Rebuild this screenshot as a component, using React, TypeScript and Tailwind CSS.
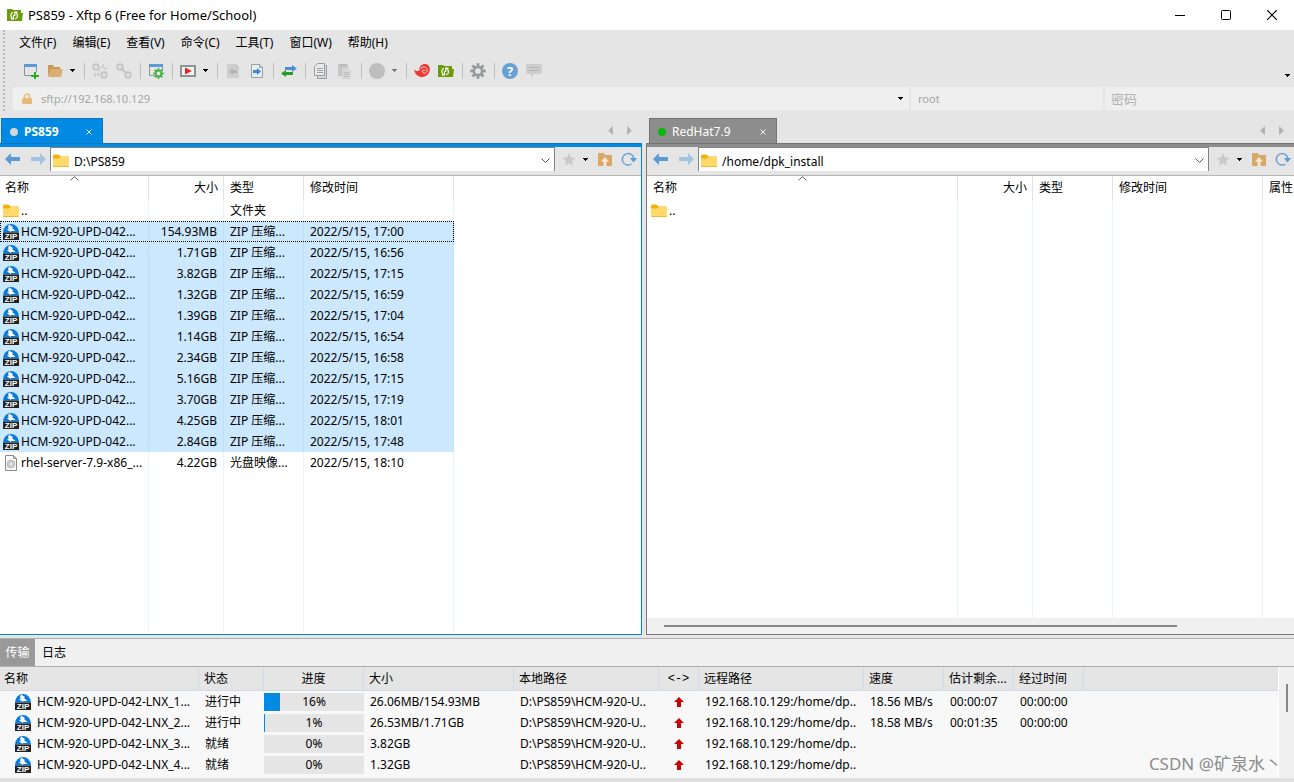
import React from 'react';

interface IIconProps {
  className?: string;
}

const ZipIcon = React.memo<IIconProps>(({ className = '' }) => (
  <svg viewBox="0 0 16 16" className={`h-4 w-4 shrink-0 ${className}`} aria-hidden="true">
    <path d="M0 8.500a8 8.500 0 0 1 16 0z" fill="#0a7bd8" />
    <path d="M6 .5l4 2.500-1 1 3.500 3H8V8L4 5.500l2-1-1-1z" fill="#fff" />
    <rect y="8.500" width="16" height="7.500" fill="#222" />
    <text x="8" y="15" textAnchor="middle" fontSize="8" fontWeight="700" fill="#fff" fontFamily="Liberation Sans, sans-serif">
      ZIP
    </text>
  </svg>
));

const FolderIcon = () => (
  <svg viewBox="0 0 16 14" className="h-[14px] w-4 shrink-0" aria-hidden="true">
    <path d="M0 2a1.500 1.500 0 0 1 1.500-1.500h4L7.500 2.500H15a1 1 0 0 1 1 1V12H0z" fill="#f4b10b" />
    <path d="M0 4.500h6L8 3h8v9a1 1 0 0 1-1 1H1a1 1 0 0 1-1-1z" fill="#ffd969" />
    <path d="M0 12h16a1 1 0 0 1-1 1H1a1 1 0 0 1-1-1z" fill="#f2b632" />
  </svg>
);

const DiscImageIcon = () => (
  <svg viewBox="0 0 16 16" className="h-4 w-4 shrink-0" aria-hidden="true">
    <path d="M2.500.5h8l3 3v12h-11z" fill="#fafafa" stroke="#8a8a8a" />
    <path d="M10.500.5v3h3" fill="none" stroke="#8a8a8a" />
    <circle cx="8" cy="9" r="4" fill="#c9cdd0" stroke="#aaa" strokeWidth=".6" />
    <circle cx="8" cy="9" r="1.200" fill="#eee" />
  </svg>
);

const XftpIcon = ({ className = '' }: IIconProps) => (
  <svg viewBox="0 0 16 14" className={`h-[14px] w-4 ${className}`} aria-hidden="true">
    <path d="M0 1h5l1 1h8v3h2l-1 8H0z" fill="#6b9a0b" />
    <path d="M6 4.300C3.200 5 3.200 9 5.200 10.300M4 10.800h2.500V7M8 11c3-.5 3.200-4.800 1-6.200M10.500 4.200H7.800V8" fill="none" stroke="#fff" strokeWidth="1.200" />
  </svg>
);

const Caret = ({ className = '' }: IIconProps) => (
  <svg viewBox="0 0 5 3" className={`h-[3px] w-[5px] ${className}`} shapeRendering="crispEdges" aria-hidden="true">
    <path d="M0 0h5v1H4v1H3v1H2V2H1V1H0z" fill="currentColor" />
  </svg>
);

interface IToolButtonProps {
  label: string;
  children: React.ReactNode;
}

const ToolButton = ({ label, children }: IToolButtonProps) => (
  <button type="button" aria-label={label} className="flex h-6 w-6 items-center justify-center">
    <svg viewBox="0 0 16 16" className="h-4 w-4">
      {children}
    </svg>
  </button>
);

const ToolCaret = ({ label, className = '' }: { label: string; className?: string }) => (
  <button type="button" aria-label={label} className={`flex h-6 w-[13px] items-center pl-[3px] ${className}`}>
    <Caret />
  </button>
);

const ToolSeparator = () => (
  <div className="flex w-2 justify-center">
    <div className="h-4 w-px bg-[#bdbdbd]" />
  </div>
);

const gearTeeth = [0, 45, 90, 135, 180, 225, 270, 315];

const Gear = ({ cx, cy, r, color, hole }: { cx: number; cy: number; r: number; color: string; hole: string }) => (
  <g fill={color}>
    {gearTeeth.map((angle) => (
      <path key={angle} d={`M${cx - r * 0.18} ${cy - r}h${r * 0.36}v${r}h-${r * 0.36}z`} transform={`rotate(${angle} ${cx} ${cy})`} />
    ))}
    <circle cx={cx} cy={cy} r={r * 0.7} />
    <circle cx={cx} cy={cy} r={r * 0.36} fill={hole} />
  </g>
);

const TitleBar = () => (
  <header className="flex h-[30px] items-center bg-white pl-[7px]">
    <XftpIcon />
    <h1 className="ml-[5px] text-[13px]">PS859 - Xftp 6 (Free for Home/School)</h1>
    <div className="ml-auto flex text-black">
      <button type="button" aria-label="最小化" className="flex h-[30px] w-[46px] items-center justify-center">
        <svg viewBox="0 0 10 10" className="h-[10px] w-[10px]"><path d="M0 5.500h10" stroke="currentColor" /></svg>
      </button>
      <button type="button" aria-label="最大化" className="flex h-[30px] w-[46px] items-center justify-center">
        <svg viewBox="0 0 10 10" className="h-[10px] w-[10px]"><rect x=".5" y=".5" width="9" height="9" rx="1" fill="none" stroke="currentColor" /></svg>
      </button>
      <button type="button" aria-label="关闭" className="flex h-[30px] w-[45px] items-center justify-center">
        <svg viewBox="0 0 10 10" className="h-[10px] w-[10px]"><path d="M0 0l10 10M10 0L0 10" stroke="currentColor" strokeWidth="1.200" /></svg>
      </button>
    </div>
  </header>
);

const menus = ['文件(F)', '编辑(E)', '查看(V)', '命令(C)', '工具(T)', '窗口(W)', '帮助(H)'];

const MenuBar = () => (
  <nav className="flex h-[26px] items-center gap-4 pl-[6px]">
    {menus.map((menu) => (
      <button key={menu} type="button">{menu}</button>
    ))}
  </nav>
);

const Toolbar = () => (
  <div className="flex h-[31px] items-center pb-[2px] pl-[6px]">
    <ToolButton label="新建会话">
      <path d="M1 1h13v3H1z" fill="#5a9bd5" />
      <path d="M1.500 4v8.500H9M13.500 4v5" fill="none" stroke="#8d9296" />
      <path d="M11 9h2v3h3v2h-3v3h-2v-3H8v-2h3z" fill="#23a923" />
    </ToolButton>
    <ToolButton label="打开">
      <path d="M1 2h5l1 2h6v3H4l-3 6z" fill="#c9995a" />
      <path d="M4 6h12l-2 8H1z" fill="#dcae72" />
    </ToolButton>
    <ToolCaret label="最近会话" />
    <ToolSeparator />
    <ToolButton label="断开">
      <g fill="none" stroke="#c6c6c6" strokeWidth="2">
        <circle cx="4" cy="4" r="2.800" />
        <circle cx="12" cy="12" r="2.800" />
        <path d="M6 6l2 2M9 9l1 1M11 1v3M15 5l-3 1M9 5l2-1M3 10v4M6 10v3" strokeWidth="1.500" />
      </g>
    </ToolButton>
    <ToolButton label="重新连接">
      <g fill="none" stroke="#c6c6c6" strokeWidth="2">
        <circle cx="4" cy="4" r="2.800" />
        <circle cx="12" cy="12" r="2.800" />
        <path d="M5 5l6 6" />
      </g>
    </ToolButton>
    <ToolSeparator />
    <ToolButton label="属性">
      <path d="M1 1h14v3H1z" fill="#5a9bd5" />
      <path d="M1.500 4v8.500H6M14.500 4v4" fill="none" stroke="#8d9296" />
      <Gear cx={10.5} cy={10.5} r={5.3} color="#45b045" hole="#e5e5e5" />
    </ToolButton>
    <ToolSeparator />
    <ToolButton label="同步">
      <path d="M1 3h14v10H1z" fill="#f3f3f3" stroke="#8d9296" strokeWidth="2" />
      <path d="M5 4.500v7L12 8z" fill="#e02828" />
    </ToolButton>
    <ToolCaret label="同步选项" />
    <ToolSeparator />
    <ToolButton label="传输到左侧">
      <path d="M2 1h9l3 3v11H2z" fill="#cecece" />
      <path d="M11 1v3h3" fill="none" stroke="#bbb" />
      <path d="M12 7H8V5L4 8.500 8 12v-2h4z" fill="#b2b2b2" />
    </ToolButton>
    <ToolButton label="传输到右侧">
      <path d="M2.500 1.500h8l3 3v10h-11z" fill="#e9eef2" stroke="#999fa4" />
      <path d="M10.500 1.500v3h3" fill="none" stroke="#999fa4" />
      <path d="M4 7h4V5l4 3.500L8 12v-2H4z" fill="#4285d0" />
    </ToolButton>
    <ToolSeparator />
    <ToolButton label="双向传输">
      <path d="M4 4h7V2l5 3.500L11 9V7H4z" fill="#4a90d9" />
      <path d="M12 9H5V7L0 10.500 5 14v-2h7z" fill="#23a023" />
    </ToolButton>
    <ToolSeparator />
    <ToolButton label="复制">
      <path d="M4.500 2.500h9v13h-9z" fill="#d5d5d5" stroke="#9a9fa2" />
      <path d="M4.500.5h7v12h-10v-9z" fill="#e9e9e9" stroke="#9a9fa2" />
      <path d="M4 5.500h6M4 7.500h6M4 9.500h6" stroke="#9a9fa2" />
    </ToolButton>
    <ToolButton label="粘贴">
      <path d="M1 1h10v12H1z" fill="#c6c6c6" />
      <path d="M5 5h6l3 3v8H5z" fill="#d6d6d6" />
      <path d="M3 1h6v2H3z" fill="#b9b9b9" />
      <path d="M7 9.500h5M7 11.500h5M7 13.500h5" stroke="#bbb" />
    </ToolButton>
    <ToolSeparator />
    <ToolButton label="停止">
      <circle cx="8" cy="8" r="8" fill="#bebebe" />
    </ToolButton>
    <ToolCaret label="停止选项" className="text-[#777]" />
    <ToolSeparator />
    <ToolButton label="Xshell">
      <path d="M0 6.500C2 8 3.500 8.500 5 7.500 5 3 8.500.5 12 1c4 .8 5 6 2.500 9.500C11.500 15.500 2 16 0 6.500z" fill="#ee3a33" />
      <path d="M5 7.500C6 4.500 10 3 12.500 5c1.500 2 .5 5-2 5.200-2 0-2.800-2.200-1.300-3.200 1-.5 1.800.3 1.500 1" fill="none" stroke="#f5dedd" strokeWidth=".9" />
    </ToolButton>
    <button type="button" aria-label="Xftp" className="flex h-6 w-6 items-center justify-center">
      <XftpIcon />
    </button>
    <ToolSeparator />
    <ToolButton label="选项">
      <Gear cx={8} cy={8} r={7.8} color="#979b9d" hole="#e5e5e5" />
    </ToolButton>
    <ToolSeparator />
    <ToolButton label="帮助">
      <circle cx="8" cy="8" r="8" fill="#6a9fd4" />
      <text x="8" y="13" textAnchor="middle" fontSize="13" fontWeight="700" fill="#fff">?</text>
    </ToolButton>
    <ToolButton label="反馈">
      <path d="M2 1h12a2 2 0 0 1 2 2v6a2 2 0 0 1-2 2H8l-3 4v-4H2a2 2 0 0 1-2-2V3a2 2 0 0 1 2-2z" fill="#cdcdcd" />
      <path d="M3 4.500h10M3 7.500h10" stroke="#b5b5b5" />
    </ToolButton>
    <button type="button" aria-label="更多按钮" className="mr-1 ml-auto self-end pb-2">
      <Caret />
    </button>
  </div>
);

const AddressBar = () => (
  <div className="flex h-[23px] gap-[2px] text-[#a5a5a5]">
    <div className="flex min-w-0 flex-[881] items-center bg-[#efefef] pr-[6px] pl-[9px]">
      <svg viewBox="0 0 10 12" className="mr-[9px] h-3 w-[10px] shrink-0" aria-hidden="true">
        <path d="M2.500 6V3.500a2.500 2.500 0 0 1 5 0V6" fill="none" stroke="#e8bd80" strokeWidth="1.500" />
        <rect y="5" width="10" height="6" rx="1" fill="#e9b877" />
      </svg>
      <input aria-label="地址" defaultValue="sftp://192.168.10.129" className="min-w-0 flex-1 bg-transparent text-[11px] outline-none" />
      <button type="button" aria-label="地址历史" className="text-black"><Caret /></button>
    </div>
    <div className="flex min-w-0 flex-[178] bg-[#efefef] px-[7px]">
      <input aria-label="用户名" defaultValue="root" className="w-full min-w-0 bg-transparent text-[11px] outline-none" />
    </div>
    <div className="flex min-w-0 flex-[177] bg-[#efefef] px-[6px]">
      <input type="password" aria-label="密码" placeholder="密码" className="w-full min-w-0 bg-transparent text-[13px] outline-none placeholder:text-[#b0b0b0]" />
    </div>
  </div>
);

interface IPaneFrameProps {
  title: string;
  path: string;
  active: boolean;
  className: string;
  children: React.ReactNode;
}

const PaneFrame = ({ title, path, active, className, children }: IPaneFrameProps) => (
  <section className={`flex min-w-0 flex-col ${className}`}>
    <div className="flex h-[33px] items-end">
      <div
        role="tab"
        aria-selected={active}
        className={`flex h-[25px] items-center border-x border-t pt-[2px] pr-[10px] pl-2 text-white ${
          active ? 'ml-px w-[102px] border-[#0b77c2] bg-[#008ae4] font-bold' : 'ml-[3px] w-[128px] border-[#747474] bg-[#8d8d8d]'
        }`}
      >
        <span className={`mr-[6px] h-2 w-2 rounded-full ${active ? 'bg-[#d5d5d5]' : 'bg-[#08b808]'}`} />
        {title}
        <button type="button" aria-label="关闭标签" className="ml-auto">
          <svg viewBox="0 0 6 6" className="h-[6px] w-[6px]"><path d="M.5.5l5 5M5.500.5l-5 5" stroke="#fff" strokeWidth=".9" /></svg>
        </button>
      </div>
      <div className="mr-[10px] mb-2 ml-auto flex gap-[14px] text-[#b3b3b3]">
        <button type="button" aria-label="上一个标签">
          <svg viewBox="0 0 5 9" className="h-[9px] w-[5px]"><path d="M5 0v9L0 4.500z" fill="currentColor" /></svg>
        </button>
        <button type="button" aria-label="下一个标签">
          <svg viewBox="0 0 5 9" className="h-[9px] w-[5px]"><path d="M0 0v9l5-4.500z" fill="currentColor" /></svg>
        </button>
      </div>
    </div>
    <div
      className={`flex min-h-0 flex-1 flex-col border-b ${
        active ? 'border-r border-[#0b82cf]' : 'border-l border-[#7a7a7a]'
      }`}
    >
      <div className={`h-1 shrink-0 border-t ${active ? 'border-[#0b77c2] bg-[#008ae4]' : 'border-[#747474] bg-[#8d8d8d]'}`} />
      <div className={`flex h-[29px] shrink-0 items-center border-b border-[#b5b5b5] bg-[#e5e5e5] pb-1 ${active ? 'pr-1 pl-[5px]' : 'pr-[3px] pl-[6px]'}`}>
        <button type="button" aria-label="后退" className="mr-[9px]">
          <svg viewBox="0 0 16 12" className="h-3 w-4"><path d="M0 6l6-6v4h9v4H6v4z" fill="#5b9bd5" /></svg>
        </button>
        <button type="button" aria-label="前进" className="mr-1">
          <svg viewBox="0 0 16 12" className="h-3 w-4"><path d="M16 6l-6-6v4H1v4h9v4z" fill="#a3c3df" /></svg>
        </button>
        <div className="flex h-6 min-w-0 flex-1 items-center border-x border-t border-[#838383] bg-white pt-[2px] pr-1 pl-[2px]">
          <FolderIcon />
          <input aria-label="路径" defaultValue={path} className="ml-[5px] min-w-0 flex-1 bg-transparent pt-[2px] outline-none" />
          <button type="button" aria-label="路径历史">
            <svg viewBox="0 0 9 5" className="h-[5px] w-[9px]"><path d="M.5.5l4 4 4-4" fill="none" stroke="#555" /></svg>
          </button>
        </div>
        <button type="button" aria-label="书签" className="mr-[7px] ml-[7px]">
          <svg viewBox="0 0 14 13" className="h-[13px] w-[14px]"><path d="M7 0l2 4.500 5 .5-4 3 1.500 5L7 10.300 2.500 13 4 8 0 5l5-.5z" fill="#c9c9c9" /></svg>
        </button>
        <button type="button" aria-label="书签列表" className="mr-[10px]"><Caret /></button>
        <button type="button" aria-label="上级目录" className="mr-[9px]">
          <svg viewBox="0 0 14 13" className="h-[13px] w-[14px]">
            <path d="M0 0h6l1 2h7v11H0z" fill="#d9a766" />
            <path d="M7 4l4 4.500H8.500V13h-3V8.500H3z" fill="#f5ead9" />
          </svg>
        </button>
        <button type="button" aria-label="刷新">
          <svg viewBox="0 0 16 14" className="h-[14px] w-4">
            <path d="M10.500 12A5.800 5.800 0 1 1 12.800 6" fill="none" stroke="#6ba3d6" strokeWidth="1.500" />
            <path d="M9 6h7l-3.500 4.500z" fill="#5b9bd5" />
          </svg>
        </button>
      </div>
      <div className="flex min-h-0 flex-1 flex-col overflow-hidden bg-white">{children}</div>
    </div>
  </section>
);

interface IFile {
  name: string;
  size: string;
  type: string;
  modified: string;
}

const zipFiles: IFile[] = [
  ['154.93MB', '17:00'],
  ['1.71GB', '16:56'],
  ['3.82GB', '17:15'],
  ['1.32GB', '16:59'],
  ['1.39GB', '17:04'],
  ['1.14GB', '16:54'],
  ['2.34GB', '16:58'],
  ['5.16GB', '17:15'],
  ['3.70GB', '17:19'],
  ['4.25GB', '18:01'],
  ['2.84GB', '17:48'],
].map(([size, time]) => ({
  name: 'HCM-920-UPD-042...',
  size,
  type: 'ZIP 压缩...',
  modified: `2022/5/15, ${time}`,
}));

const headBase = 'relative h-6 border-r border-[#e2e2e2] font-normal';
const headCell = `${headBase} px-[6px] text-left`;
const headCellRight = `${headBase} px-[5px] text-right`;
const bodyCell = 'h-[21px] border-r border-[#eaf2fb] px-[6px]';
const selectedCell = 'h-[21px] border-r border-[#bddffa] px-[6px]';

const SortMark = () => (
  <svg viewBox="0 0 9 5" className="absolute top-0 left-1/2 -ml-1 h-[5px] w-[9px]" aria-hidden="true">
    <path d="M.5 4.500l4-4 4 4" fill="none" stroke="#666" />
  </svg>
);

const LocalFiles = () => (
  <table className="h-full w-[454px] table-fixed border-separate border-spacing-0 whitespace-nowrap">
    <colgroup>
      <col className="w-[149px]" />
      <col className="w-[75px]" />
      <col className="w-[80px]" />
      <col className="w-[150px]" />
    </colgroup>
    <thead>
      <tr>
        <th className={`${headBase} px-[5px] text-left`}>名称<SortMark /></th>
        <th className={headCellRight}>大小</th>
        <th className={headCell}>类型</th>
        <th className={headCell}>修改时间</th>
      </tr>
    </thead>
    <tbody>
      <tr>
        <td className="h-[21px] border-r border-[#eaf2fb] pl-[3px]">
          <div className="flex items-center gap-[2px]"><FolderIcon />..</div>
        </td>
        <td className={bodyCell} />
        <td className={bodyCell}>文件夹</td>
        <td className={bodyCell} />
      </tr>
      {zipFiles.map((file, index) => (
        <tr
          key={index}
          className={`bg-[#cce8ff] ${index === 0 ? 'outline-1 -outline-offset-1 outline-black outline-dotted' : ''}`}
        >
          <td className="h-[21px] border-r border-[#bddffa] pl-[3px]">
            <div className="flex items-center gap-[2px]"><ZipIcon />{file.name}</div>
          </td>
          <td className={`${selectedCell} text-right`}>{file.size}</td>
          <td className={selectedCell}>{file.type}</td>
          <td className={selectedCell}>{file.modified}</td>
        </tr>
      ))}
      <tr>
        <td className="h-[21px] border-r border-[#eaf2fb] pl-[3px]">
          <div className="flex items-center gap-[2px]"><DiscImageIcon />rhel-server-7.9-x86_...</div>
        </td>
        <td className={`${bodyCell} text-right`}>4.22GB</td>
        <td className={bodyCell}>光盘映像...</td>
        <td className={bodyCell}>2022/5/15, 18:10</td>
      </tr>
      {/* stretches the column lines to the bottom of the pane */}
      <tr aria-hidden="true">
        <td className="border-r border-[#eaf2fb]" />
        <td className="border-r border-[#eaf2fb]" />
        <td className="border-r border-[#eaf2fb]" />
        <td className="border-r border-[#eaf2fb]" />
      </tr>
    </tbody>
  </table>
);

const RemoteFiles = () => (
  <>
    <div className="min-h-0 flex-1 overflow-hidden">
      <table className="h-full w-[766px] table-fixed border-separate border-spacing-0 whitespace-nowrap">
        <colgroup>
          <col className="w-[311px]" />
          <col className="w-[75px]" />
          <col className="w-[80px]" />
          <col className="w-[150px]" />
          <col className="w-[150px]" />
        </colgroup>
        <thead>
          <tr>
            <th className={headCell}>名称<SortMark /></th>
            <th className={headCellRight}>大小</th>
            <th className={headCell}>类型</th>
            <th className={headCell}>修改时间</th>
            <th className={headCell}>属性</th>
          </tr>
        </thead>
        <tbody>
          <tr>
            <td className="h-[21px] border-r border-[#eaf2fb] pl-1">
              <div className="flex items-center gap-[2px]"><FolderIcon />..</div>
            </td>
            <td className={bodyCell} />
            <td className={bodyCell} />
            <td className={bodyCell} />
            <td className={bodyCell} />
          </tr>
          <tr aria-hidden="true">
            <td className="border-r border-[#eaf2fb]" />
            <td className="border-r border-[#eaf2fb]" />
            <td className="border-r border-[#eaf2fb]" />
            <td className="border-r border-[#eaf2fb]" />
            <td className="border-r border-[#eaf2fb]" />
          </tr>
        </tbody>
      </table>
    </div>
    <div className="flex h-4 shrink-0 items-center bg-[#f0f0f0] pr-[117px] pl-[17px]">
      <div className="h-[2px] flex-1 bg-[#868686]" />
    </div>
  </>
);

interface ITransfer {
  name: string;
  status: string;
  progress: number;
  size: string;
  speed?: string;
  remaining?: string;
  elapsed?: string;
}

const transfers: ITransfer[] = [
  { name: 'HCM-920-UPD-042-LNX_1...', status: '进行中', progress: 16, size: '26.06MB/154.93MB', speed: '18.56 MB/s', remaining: '00:00:07', elapsed: '00:00:00' },
  { name: 'HCM-920-UPD-042-LNX_2...', status: '进行中', progress: 1, size: '26.53MB/1.71GB', speed: '18.58 MB/s', remaining: '00:01:35', elapsed: '00:00:00' },
  { name: 'HCM-920-UPD-042-LNX_3...', status: '就绪', progress: 0, size: '3.82GB' },
  { name: 'HCM-920-UPD-042-LNX_4...', status: '就绪', progress: 0, size: '1.32GB' },
];

const transferHeadBase = 'h-6 border-r border-b border-[#d0d9e6] bg-[#e5e5e5] font-normal';
const transferHead = `${transferHeadBase} px-[5px] text-left`;
const transferHeadCenter = `${transferHeadBase} text-center`;

const TransferPanel = () => (
  <section className="shrink-0 border-t border-[#b0b0b0] bg-[#f0f0f0]">
    <div role="tablist" className="flex h-[27px]">
      <button type="button" role="tab" aria-selected="true" className="w-[35px] bg-[#999] text-white">传输</button>
      <button type="button" role="tab" aria-selected="false" className="px-[7px]">日志</button>
    </div>
    <div className="relative flex h-[112px] border-t border-[#b0b0b0]">
      <div className="min-w-0 flex-1 overflow-hidden bg-[#f8f8f8]">
        <table className="w-full table-fixed border-separate border-spacing-0 whitespace-nowrap">
          <colgroup>
            <col className="w-[199px]" />
            <col className="w-[65px]" />
            <col className="w-[100px]" />
            <col className="w-[150px]" />
            <col className="w-[145px]" />
            <col className="w-[40px]" />
            <col className="w-[165px]" />
            <col className="w-[80px]" />
            <col className="w-[70px]" />
            <col className="w-[70px]" />
            <col />
          </colgroup>
          <thead>
            <tr>
              <th className={`${transferHeadBase} px-1 text-left`}>名称</th>
              <th className={transferHead}>状态</th>
              <th className={transferHeadCenter}>进度</th>
              <th className={transferHead}>大小</th>
              <th className={transferHead}>本地路径</th>
              <th className={`${transferHeadCenter} font-['Liberation_Mono',monospace]`}>&lt;-&gt;</th>
              <th className={transferHead}>远程路径</th>
              <th className={transferHead}>速度</th>
              <th className={transferHead}>估计剩余...</th>
              <th className={transferHead}>经过时间</th>
              <th className="border-b border-[#d0d9e6] bg-[#e5e5e5]" />
            </tr>
          </thead>
          <tbody>
            {transfers.map((item) => (
              <tr key={item.name}>
                <td className="h-[21px] pl-[15px]">
                  <div className="flex items-center gap-[6px]"><ZipIcon />{item.name}</div>
                </td>
                <td className="pl-[6px]">{item.status}</td>
                <td>
                  <div
                    role="progressbar"
                    aria-label={item.name}
                    aria-valuenow={item.progress}
                    className="grid h-[18px] items-center bg-[#e5e5e5] text-center"
                  >
                    <div className="col-start-1 row-start-1 h-full bg-[#008ae4]" style={{ width: `${item.progress}%` }} />
                    <span className="col-start-1 row-start-1">{item.progress}%</span>
                  </div>
                </td>
                <td className="pl-[6px]">{item.size}</td>
                <td className="pl-[6px]">D:\PS859\HCM-920-U..</td>
                <td>
                  <svg viewBox="0 0 10 10" className="mx-auto h-[10px] w-[10px]" aria-label="上传">
                    <path d="M5 0l5 5H7v5H3V5H0z" fill="#d00000" />
                  </svg>
                </td>
                <td className="pl-[6px]">192.168.10.129:/home/dp..</td>
                <td className="pl-[6px]">{item.speed}</td>
                <td className="pl-[6px]">{item.remaining}</td>
                <td className="pl-[6px]">{item.elapsed}</td>
                <td />
              </tr>
            ))}
          </tbody>
        </table>
      </div>
      <div className="w-4 shrink-0 border-l border-white pt-[17px]">
        <div className="ml-[7px] h-7 w-[2px] bg-[#868686]" />
      </div>
      <div className="absolute right-3 bottom-1 text-[17px] leading-5 whitespace-nowrap text-[#8b8b8b]">CSDN @矿泉水丶</div>
    </div>
    <div className="h-1 bg-[#e0e0e0]" />
  </section>
);

const App = () => (
  <div className="flex h-screen min-h-[600px] flex-col overflow-hidden bg-[#e5e5e5] font-['Noto_Sans','Noto_Sans_CJK_SC',sans-serif] text-[12px] leading-4 text-black">
    <TitleBar />
    <div className="flex shrink-0">
      <div className="mx-[3px] w-[2px] border-l-2 border-dotted border-[#bcbcbc]" />
      <div className="min-w-0 flex-1 pl-[5px]">
        <MenuBar />
        <Toolbar />
        <AddressBar />
        <div className="h-px" />
      </div>
    </div>
    <main className="-mt-px flex min-h-0 flex-1 gap-1 pb-[3px]">
      <PaneFrame title="PS859" path="D:\PS859" active className="flex-[642]">
        <LocalFiles />
      </PaneFrame>
      <PaneFrame title="RedHat7.9" path="/home/dpk_install" active={false} className="flex-[648]">
        <RemoteFiles />
      </PaneFrame>
    </main>
    <TransferPanel />
  </div>
);

export default App;
